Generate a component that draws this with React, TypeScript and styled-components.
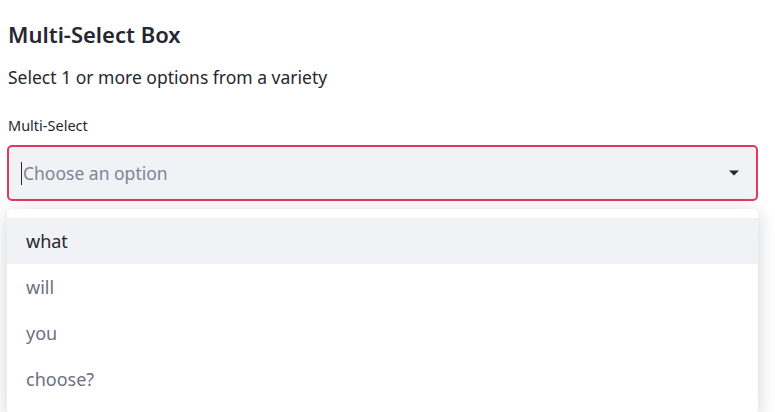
import styled, { createGlobalStyle } from "styled-components";

const GlobalStyle = createGlobalStyle`
  html, body {
    margin: 0;
    padding: 0;
    background: #ffffff;
    font-family: "Noto Sans", "Open Sans", sans-serif;
    color: #262730;
  }
`;

const Page = styled.div`
  width: 775px;
  height: 412px;
  overflow: hidden;
  padding: 0 17px 0 7px;
  box-sizing: border-box;
`;

const Title = styled.h2`
  margin: 0;
  padding: 19px 0 0 1px;
  font-size: 22px;
  line-height: 30px;
  font-weight: 600;
  color: #262730;
`;

const Subtitle = styled.p`
  margin: 0;
  padding: 15px 0 0 1px;
  font-size: 17.5px;
  line-height: 26px;
  color: #262730;
`;

const Label = styled.label`
  display: block;
  padding: 25px 0 0 1px;
  font-size: 14.5px;
  line-height: 20px;
  color: #262730;
`;

const SelectBox = styled.div`
  margin-top: 10px;
  height: 56px;
  box-sizing: border-box;
  border: 2px solid #e6375a;
  border-radius: 5px;
  background: #f0f2f6;
  display: flex;
  align-items: center;
  padding: 0 16px 0 12px;
`;

const Caret = styled.span`
  width: 1px;
  height: 23px;
  background: #262730;
  margin-right: 1px;
`;

const Placeholder = styled.span`
  flex: 1;
  font-size: 17.5px;
  color: #808495;
`;

const Arrow = styled.svg`
  width: 12px;
  height: 8px;
  fill: #262730;
`;

const Menu = styled.ul`
  list-style: none;
  margin: 8px 0 0;
  padding: 9px 0 12px;
  background: #ffffff;
  border-radius: 5px;
  box-shadow: 0 4px 20px rgba(0, 0, 0, 0.18);
`;

const Option = styled.li<{ active?: boolean }>`
  height: 46px;
  display: flex;
  align-items: center;
  padding-left: 19px;
  font-size: 18px;
  color: ${(p) => (p.active ? "#262730" : "#6c6f82")};
  background: ${(p) => (p.active ? "#f0f2f6" : "transparent")};
`;

const options = ["what", "will", "you", "choose?"];

export default function App() {
  return (
    <>
      <GlobalStyle />
      <Page>
        <Title>Multi-Select Box</Title>
        <Subtitle>Select 1 or more options from a variety</Subtitle>
        <Label>Multi-Select</Label>
        <SelectBox>
          <Caret />
          <Placeholder>Choose an option</Placeholder>
          <Arrow viewBox="0 0 12 8">
            <path d="M1 1.5h10L6 6.5z" />
          </Arrow>
        </SelectBox>
        <Menu>
          {options.map((o, i) => (
            <Option key={o} active={i === 0}>
              {o}
            </Option>
          ))}
        </Menu>
      </Page>
    </>
  );
}
